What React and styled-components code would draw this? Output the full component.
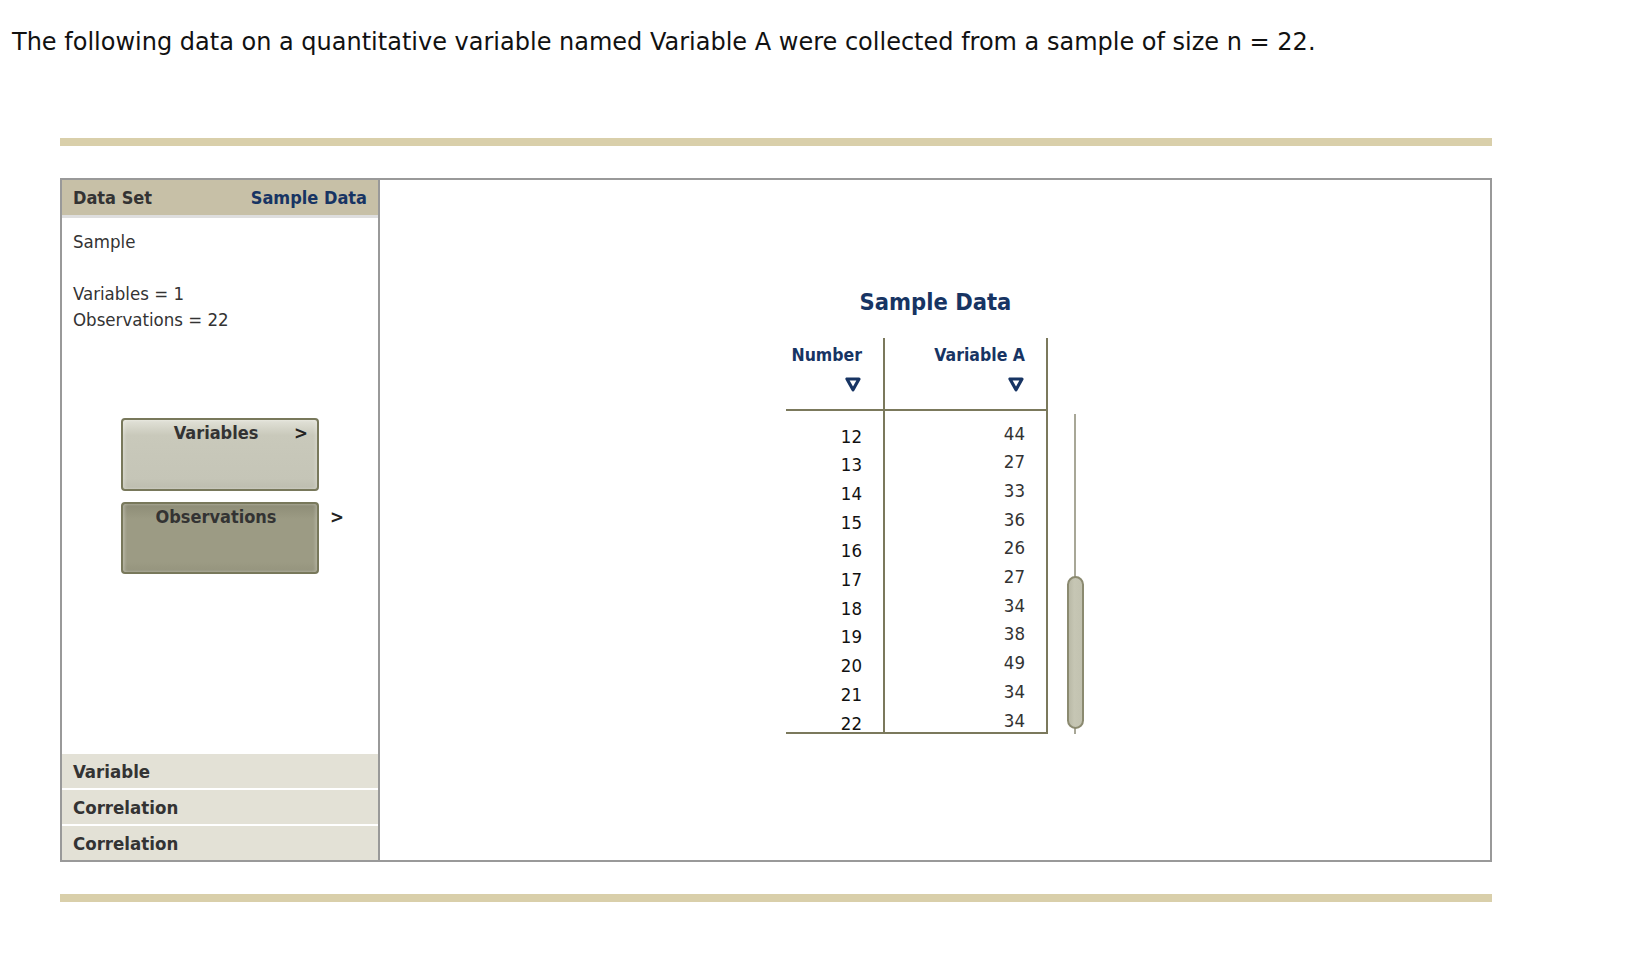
import React from "react";
import styled, { createGlobalStyle } from "styled-components";

const Global = createGlobalStyle`
  html, body { margin: 0; padding: 0; background: #ffffff; }
  body { font-family: "DejaVu Sans", Verdana, sans-serif; }
`;

const cond = `"DejaVu Sans Condensed", "DejaVu Sans", sans-serif`;
const navy = "#173463";
const olive = "#7b795c";

const Page = styled.div`
  width: 1644px;
`;

const Intro = styled.p`
  margin: 27px 0 0 12px;
  font-family: "DejaVu Sans", Verdana, sans-serif;
  font-size: 24px;
  line-height: 30px;
  color: #111;
`;

const Wrap = styled.div`
  margin-left: 60px;
  width: 1432px;
`;

const Bar = styled.div`
  height: 8px;
  background: #d9cfaa;
  margin-top: ${(p) => p.$top}px;
`;

const Panel = styled.div`
  margin-top: 32px;
  border: 2px solid #999999;
  height: 680px;
  display: flex;
  font-family: ${cond};
  font-stretch: semi-condensed;
`;

const Sidebar = styled.div`
  width: 316px;
  border-right: 2px solid #999999;
  display: flex;
  flex-direction: column;
`;

const SideHeader = styled.div`
  height: 35px;
  background: #c7c0a7;
  border-bottom: 3px solid #dedede;
  padding: 0 11px;
  display: flex;
  align-items: center;
  justify-content: space-between;
  font-weight: bold;
  font-size: 18px;
`;

const HeaderLabel = styled.span`
  color: ${(p) => (p.$link ? navy : "#333")};
`;

const SideBody = styled.div`
  flex: 1;
  padding: 11px 11px 0;
  color: #333;
  font-size: 18.5px;
  line-height: 26px;
`;

const InfoLine = styled.div`
  margin-top: ${(p) => p.$gap || 0}px;
`;

const Buttons = styled.div`
  margin: 85px 0 0 48px;
  display: flex;
  flex-direction: column;
  gap: 11px;
`;

const ButtonRow = styled.div`
  display: flex;
  align-items: flex-start;
`;

const NavButton = styled.div`
  width: 198px;
  height: ${(p) => p.$h}px;
  box-sizing: border-box;
  border: 2px solid #78785b;
  border-radius: 4px;
  padding: 2px ${(p) => (p.$inside ? 9 : 23)}px 0
    ${(p) => (p.$inside ? 19 : 15)}px;
  display: flex;
  align-items: flex-start;
  font-weight: bold;
  font-size: 18px;
  line-height: 22px;
  color: #333;
  background: ${(p) =>
    p.$active
      ? "linear-gradient(#8d8c76 0%, #9c9b84 22%, #9c9b84 85%, #95947d 100%)"
      : "linear-gradient(#e2e2d8 0%, #c9c9bb 22%, #c5c5b7 85%, #bdbdaf 100%)"};
  box-shadow: inset 2px 0 3px rgba(255, 255, 255, 0.25),
    inset -2px 0 3px rgba(255, 255, 255, 0.2);
`;

const ButtonLabel = styled.span`
  flex: 1;
  text-align: center;
`;

const Arrow = styled.span`
  font-weight: bold;
  font-size: 18.5px;
  line-height: 22px;
  color: #222;
  margin: ${(p) => (p.$outside ? "4px 0 0 11px" : "0 0 0 4px")};
`;

const Menu = styled.div`
  display: flex;
  flex-direction: column;
`;

const MenuItem = styled.div`
  height: 34px;
  margin-top: 2px;
  background: #e3e1d6;
  padding-left: 11px;
  display: flex;
  align-items: center;
  font-weight: bold;
  font-size: 18.5px;
  color: #333;
`;

const Main = styled.div`
  flex: 1;
  display: flex;
  flex-direction: column;
  align-items: center;
  padding-top: 107px;
`;

const DataTitle = styled.div`
  font-weight: bold;
  font-size: 23.5px;
  line-height: 30px;
  color: ${navy};
  padding-left: 1px;
`;

const TableArea = styled.div`
  margin-top: 21px;
  display: flex;
  align-items: flex-start;
  gap: 19px;
`;

const Table = styled.div`
  display: flex;
  border-bottom: 2px solid ${olive};
`;

const Column = styled.div`
  width: ${(p) => p.$w}px;
  border-right: 2px solid ${olive};
  display: flex;
  flex-direction: column;
`;

const HeadCell = styled.div`
  height: 73px;
  box-sizing: border-box;
  border-bottom: 2px solid ${olive};
  padding: 2px 21px 0 0;
  display: flex;
  flex-direction: column;
  align-items: flex-end;
  font-weight: bold;
  font-size: 17.5px;
  line-height: 30px;
  color: ${navy};
`;

const SortIcon = styled.svg`
  display: block;
  margin: 7px 1px 0 0;
`;

const Values = styled.div`
  height: 321px;
  overflow: hidden;
  box-sizing: border-box;
  padding: ${(p) => p.$pad}px 21px 0 0;
  text-align: right;
  font-size: 18.5px;
  line-height: 28.7px;
  color: ${(p) => p.$color};
`;

const Track = styled.div`
  width: 17px;
  height: 320px;
  margin-top: 76px;
  box-sizing: border-box;
  padding-bottom: 5px;
  display: flex;
  flex-direction: column;
  justify-content: flex-end;
  background: linear-gradient(
    to right,
    transparent 7.5px,
    #a8a797 7.5px,
    #a8a797 9.5px,
    transparent 9.5px
  );
`;

const Thumb = styled.div`
  box-sizing: border-box;
  border: 2px solid #8b8a70;
  border-radius: 9px;
  background: linear-gradient(to right, #b9b9a6, #c6c6b4 40%, #c2c2b0);
`;

const Triangle = () => (
  <SortIcon width="16" height="15" viewBox="0 0 16 15">
    <polygon
      points="2,2 14,2 8,12.8"
      fill="#ffffff"
      stroke={navy}
      strokeWidth="3.2"
      strokeLinejoin="round"
    />
  </SortIcon>
);

const numbers = [12, 13, 14, 15, 16, 17, 18, 19, 20, 21, 22];
const values = [44, 27, 33, 36, 26, 27, 34, 38, 49, 34, 34];

export default function App() {
  const trackH = 320 - 5;
  const thumbH = Math.round(trackH * 0.485);
  return (
    <Page>
      <Global />
      <Intro>
        The following data on a quantitative variable named Variable A were
        collected from a sample of size n = 22.
      </Intro>
      <Wrap>
        <Bar $top={81} />
        <Panel>
          <Sidebar>
            <SideHeader>
              <HeaderLabel>Data Set</HeaderLabel>
              <HeaderLabel $link>Sample Data</HeaderLabel>
            </SideHeader>
            <SideBody>
              <InfoLine>Sample</InfoLine>
              <InfoLine $gap={26}>Variables = 1</InfoLine>
              <InfoLine>Observations = 22</InfoLine>
              <Buttons>
                <ButtonRow>
                  <NavButton $h={73} $inside>
                    <ButtonLabel>Variables</ButtonLabel>
                    <Arrow>&gt;</Arrow>
                  </NavButton>
                </ButtonRow>
                <ButtonRow>
                  <NavButton $h={72} $active>
                    <ButtonLabel>Observations</ButtonLabel>
                  </NavButton>
                  <Arrow $outside>&gt;</Arrow>
                </ButtonRow>
              </Buttons>
            </SideBody>
            <Menu>
              <MenuItem>Variable</MenuItem>
              <MenuItem>Correlation</MenuItem>
              <MenuItem>Correlation</MenuItem>
            </Menu>
          </Sidebar>
          <Main>
            <DataTitle>Sample Data</DataTitle>
            <TableArea>
              <Table>
                <Column $w={97}>
                  <HeadCell>
                    Number
                    <Triangle />
                  </HeadCell>
                  <Values $pad={11.5} $color="#111">
                    {numbers.map((n) => (
                      <div key={n}>{n}</div>
                    ))}
                  </Values>
                </Column>
                <Column $w={161}>
                  <HeadCell>
                    Variable A
                    <Triangle />
                  </HeadCell>
                  <Values $pad={8.5} $color="#333">
                    {values.map((v, i) => (
                      <div key={i}>{v}</div>
                    ))}
                  </Values>
                </Column>
              </Table>
              <Track>
                <Thumb style={{ height: thumbH }} />
              </Track>
            </TableArea>
          </Main>
        </Panel>
        <Bar $top={32} />
      </Wrap>
    </Page>
  );
}
